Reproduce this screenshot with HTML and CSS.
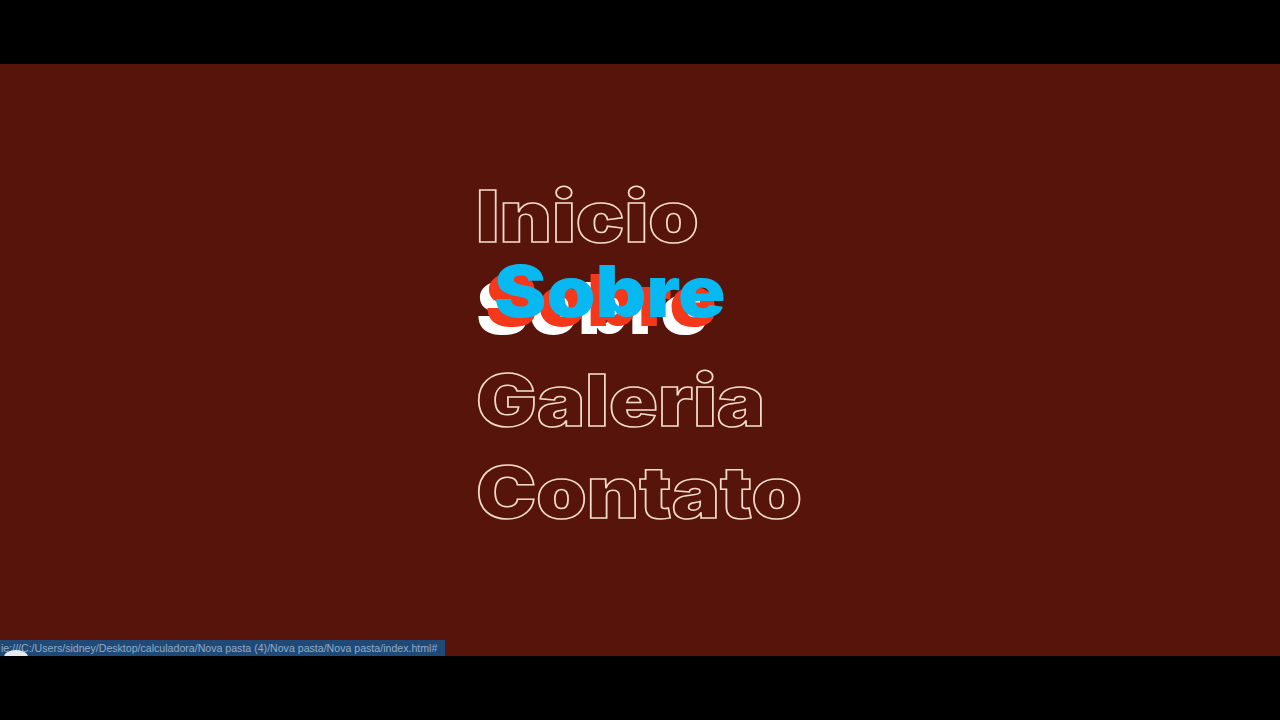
FILE: index.html
```html
<!DOCTYPE html>
<html lang="pt-BR">
<head>
  <meta charset="UTF-8">
  <meta name="viewport" content="width=device-width, initial-scale=1.0">
  <title>Menu</title>
  <link rel="stylesheet" href="styles.css">
</head>
<body>

<div id="stage">
  <ul class="menu">
    <li><a href="#">Inicio</a></li>
    <li><a href="#" class="active">Sobre</a></li>
    <li><a href="#">Galeria</a></li>
    <li><a href="#">Contato</a></li>
  </ul>
  <div class="status">
    <span class="cursor"></span>
    <span class="status-text">ie:///C:/Users/sidney/Desktop/calculadora/Nova pasta (4)/Nova pasta/Nova pasta/index.html#</span>
  </div>
</div>

</body>
</html>
```

FILE: styles.css
```css
html, body {
  height: 100%;
}

body {
  margin: 0;
  padding: 64px 0;
  box-sizing: border-box;
  background-color: #000;
  font-family: Inter, "Liberation Sans", sans-serif;
}

#stage {
  position: relative;
  height: 100%;
  overflow: hidden;
  display: flex;
  align-items: center;
  padding-left: 476px;
  box-sizing: border-box;
  background-color: #57140a;
}

.menu {
  list-style: none;
  margin: 0;
  padding: 0 0 13px;
}

.menu li {
  height: 92px;
}

.menu a {
  display: inline-block;
  font-size: 71px;
  font-weight: 900;
  line-height: 92px;
  text-decoration: none;
  color: transparent;
  -webkit-text-stroke: 1.5px #f4dccd;
  transform: scaleX(1.137);
  transform-origin: left center;
}

.menu a.active {
  color: #08b8f0;
  -webkit-text-stroke: 0;
  transform: translate(18px, -17px) scaleX(1.108);
  text-shadow: -8px 9px 0 #f5381a, -16px 17px 0 #fff;
}

.status {
  position: absolute;
  left: 0;
  bottom: 0;
  width: 445px;
  height: 16px;
  overflow: hidden;
  background-color: #1f4a78;
}

.status-text {
  display: block;
  padding-left: 1px;
  font-family: "Liberation Sans", sans-serif;
  font-size: 10.6px;
  line-height: 16px;
  white-space: nowrap;
  color: #93abc6;
}

.cursor {
  position: absolute;
  left: 4px;
  bottom: -8px;
  width: 24px;
  height: 14px;
  border-radius: 50%;
  background-color: #e8e8e8;
}
```
